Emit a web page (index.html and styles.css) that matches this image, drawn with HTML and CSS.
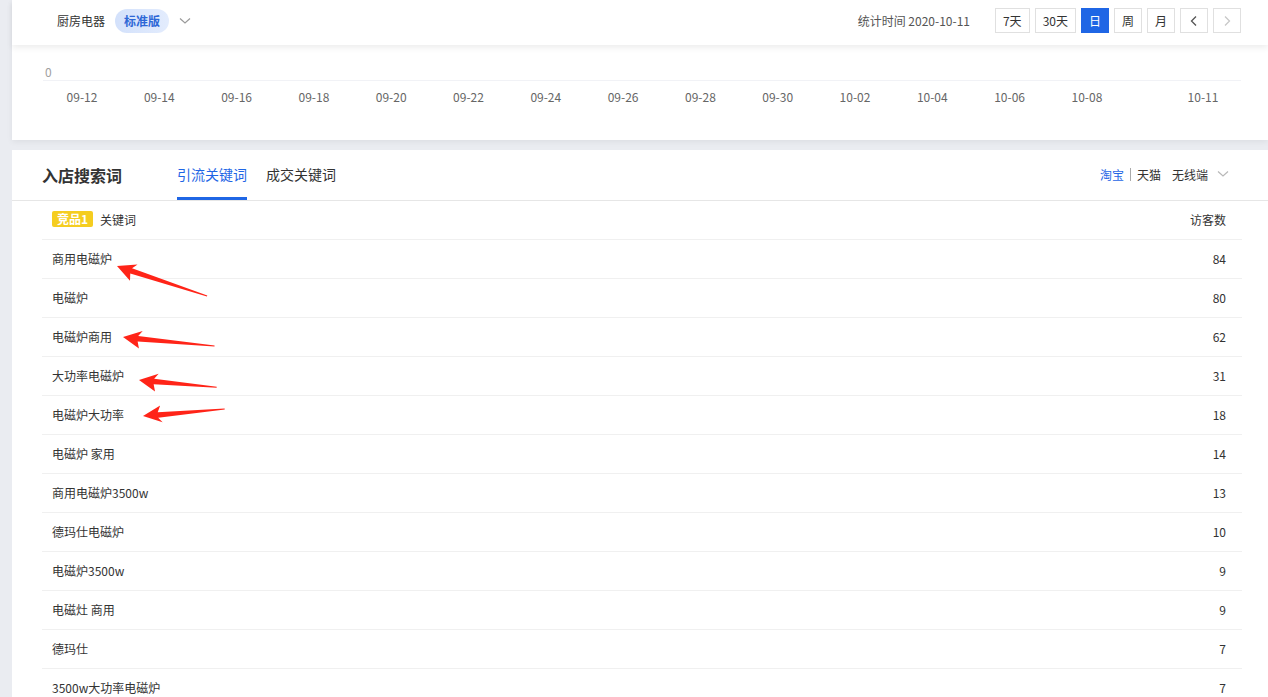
FILE: index.html
```html
<!DOCTYPE html>
<html lang="zh">
<head>
<meta charset="utf-8">
<link rel="stylesheet" href="styles.css">
</head>
<body>
<div class="page">
  <section class="top-card">
    <header class="topbar">
      <div class="crumb">
        <span class="cat">厨房电器</span>
        <span class="edition">标准版</span>
        <svg class="chev" width="12" height="8" viewBox="0 0 12 8"><path d="M1 1.5 L6 6 L11 1.5" fill="none" stroke="#9a9a9a" stroke-width="1.2"/></svg>
      </div>
      <div class="range">
        <span class="stat-time">统计时间 2020-10-11</span>
        <div class="btns">
          <button class="btn">7天</button>
          <button class="btn">30天</button>
          <button class="btn active">日</button>
          <button class="btn">周</button>
          <button class="btn">月</button>
          <button class="btn icon"><svg width="10" height="12" viewBox="0 0 10 12"><path d="M7 1.5 L2.5 6 L7 10.5" fill="none" stroke="#555" stroke-width="1.3"/></svg></button>
          <button class="btn icon"><svg width="10" height="12" viewBox="0 0 10 12"><path d="M3 1.5 L7.5 6 L3 10.5" fill="none" stroke="#c8c8c8" stroke-width="1.3"/></svg></button>
        </div>
      </div>
    </header>
    <div class="chart">
      <div class="y-label">0</div>
      <div class="axis">
        <span class="tick" style="left:39px">09-12</span>
        <span class="tick" style="left:116.3px">09-14</span>
        <span class="tick" style="left:193.6px">09-16</span>
        <span class="tick" style="left:270.9px">09-18</span>
        <span class="tick" style="left:348.2px">09-20</span>
        <span class="tick" style="left:425.5px">09-22</span>
        <span class="tick" style="left:502.8px">09-24</span>
        <span class="tick" style="left:580.1px">09-26</span>
        <span class="tick" style="left:657.4px">09-28</span>
        <span class="tick" style="left:734.7px">09-30</span>
        <span class="tick" style="left:812px">10-02</span>
        <span class="tick" style="left:889.3px">10-04</span>
        <span class="tick" style="left:966.6px">10-06</span>
        <span class="tick" style="left:1043.9px">10-08</span>
        <span class="tick" style="left:1160px">10-11</span>
      </div>
    </div>
  </section>

  <section class="kw-card">
    <div class="kw-head">
      <div class="kw-left">
        <h2 class="kw-title">入店搜索词</h2>
        <nav class="tabs">
          <span class="tab active">引流关键词</span>
          <span class="tab">成交关键词</span>
        </nav>
      </div>
      <div class="kw-right">
        <span class="src active">淘宝</span>
        <span class="sep"></span>
        <span class="src">天猫</span>
        <span class="device">无线端</span>
        <svg class="chev" width="12" height="8" viewBox="0 0 12 8"><path d="M1 1.5 L6 6 L11 1.5" fill="none" stroke="#b8b8b8" stroke-width="1.2"/></svg>
      </div>
    </div>
    <div class="table">
      <div class="row head">
        <div class="cell-kw"><span class="badge">竞品1</span><span>关键词</span></div>
        <div class="cell-num">访客数</div>
      </div>
      <div class="row"><div class="cell-kw">商用电磁炉</div><div class="cell-num">84</div></div>
      <div class="row"><div class="cell-kw">电磁炉</div><div class="cell-num">80</div></div>
      <div class="row"><div class="cell-kw">电磁炉商用</div><div class="cell-num">62</div></div>
      <div class="row"><div class="cell-kw">大功率电磁炉</div><div class="cell-num">31</div></div>
      <div class="row"><div class="cell-kw">电磁炉大功率</div><div class="cell-num">18</div></div>
      <div class="row"><div class="cell-kw">电磁炉 家用</div><div class="cell-num">14</div></div>
      <div class="row"><div class="cell-kw">商用电磁炉3500w</div><div class="cell-num">13</div></div>
      <div class="row"><div class="cell-kw">德玛仕电磁炉</div><div class="cell-num">10</div></div>
      <div class="row"><div class="cell-kw">电磁炉3500w</div><div class="cell-num">9</div></div>
      <div class="row"><div class="cell-kw">电磁灶 商用</div><div class="cell-num">9</div></div>
      <div class="row"><div class="cell-kw">德玛仕</div><div class="cell-num">7</div></div>
      <div class="row"><div class="cell-kw">3500w大功率电磁炉</div><div class="cell-num">7</div></div>
      <div class="row"><div class="cell-kw">电磁炉 商用 大功率</div><div class="cell-num">6</div></div>
    </div>
  </section>
</div>

<svg class="annot" width="1268" height="697" viewBox="0 0 1268 697">
  <g fill="#ff2418">
    <g transform="translate(117,266) rotate(18.4)"><polygon points="0,0 19,-8 15,-2.6 95,-0.4 95,0.6 15,3 17,10"/></g>
    <g transform="translate(123,337) rotate(5.6)"><polygon points="0,0 19,-8 15,-2.6 92,-0.4 92,0.6 15,3 17,10"/></g>
    <g transform="translate(139,380) rotate(5.2)"><polygon points="0,0 19,-8 15,-2.6 78,-0.4 78,0.6 15,3 17,10"/></g>
    <g transform="translate(143,416) rotate(-4.9)"><polygon points="0,0 18,-9 15,-2.6 82,-0.6 82,0.5 15,3 19,8"/></g>
  </g>
</svg>
</body>
</html>
```

FILE: styles.css
```css
* { box-sizing: border-box; }
html, body { margin: 0; padding: 0; overflow: hidden; }
body {
  background: #eaecf1;
  font-family: "Noto Sans CJK SC", "Liberation Sans", sans-serif;
  font-size: 12px;
  color: #333;
  width: 1268px;
  height: 697px;
  position: relative;
}
.page { padding-left: 12px; }

.top-card {
  background: #fff;
  box-shadow: 0 2px 6px rgba(0,0,0,0.06);
}
.topbar {
  height: 45px;
  display: flex;
  align-items: flex-start;
  justify-content: space-between;
  padding: 8px 27px 0 45px;
  box-shadow: 0 3px 6px rgba(0,0,0,0.07);
  position: relative;
  z-index: 1;
  background: #fff;
}
.crumb { display: flex; align-items: center; height: 25px; }
.cat { color: #333; line-height: 25px; }
.edition {
  margin-left: 10px;
  height: 24px;
  line-height: 24px;
  padding: 0 9px;
  border-radius: 12px;
  background: linear-gradient(90deg, #d3e1fb, #e3ecfd);
  color: #2e67d6;
  font-weight: 600;
}
.crumb .chev { margin-left: 10px; }
.range { display: flex; align-items: center; height: 25px; }
.stat-time { color: #555; margin-right: 25px; }
.btns { display: flex; gap: 5px; }
.btn {
  font: inherit;
  color: #333;
  background: #fff;
  border: 1px solid #e0e0e0;
  height: 25px;
  min-width: 27px;
  padding: 0 7px;
  line-height: 23px;
  cursor: pointer;
}
.btn.active { background: #1f66e5; border-color: #1f66e5; color: #fff; }
.btn.icon { width: 28px; padding: 0; display: flex; align-items: center; justify-content: center; }

.chart {
  height: 95px;
  padding: 20px 27px 0 31px;
}
.y-label { color: #a0a0a0; line-height: 14px; padding-left: 2px; }
.axis {
  position: relative;
  margin-top: 1px;
  border-top: 1px solid #f1f2f6;
  height: 40px;
}
.tick {
  position: absolute;
  top: 9px;
  transform: translateX(-50%);
  color: #666;
  line-height: 14px;
  white-space: nowrap;
}

.kw-card {
  margin-top: 10px;
  background: #fff;
  min-height: 600px;
}
.kw-head {
  height: 51px;
  border-bottom: 1px solid #e6e6e6;
  display: flex;
  justify-content: space-between;
  align-items: stretch;
  padding: 0 39px 0 30px;
}
.kw-left { display: flex; align-items: stretch; }
.kw-title {
  margin: 0;
  font-size: 16px;
  font-weight: 600;
  color: #333;
  line-height: 50px;
}
.tabs { display: flex; gap: 19px; margin-left: 55px; }
.tab {
  font-size: 14px;
  line-height: 48px;
  color: #333;
  border-bottom: 3px solid transparent;
  height: 50px;
  margin-bottom: -1px;
}
.tab.active { color: #1f66e5; border-bottom-color: #1f66e5; }
.kw-right { display: flex; align-items: center; padding-bottom: 2px; }
.src { color: #333; }
.src.active { color: #1f66e5; }
.sep { width: 1px; height: 13px; background: #aaa; margin: 0 6px; }
.device { margin-left: 11px; }
.kw-right .chev { margin-left: 9px; }

.table { padding: 0 26px 0 30px; }
.row {
  height: 39px;
  display: flex;
  align-items: center;
  justify-content: space-between;
  border-bottom: 1px solid #f0f0f0;
  padding: 0 16px 2px 10px;
}
.cell-kw { display: flex; align-items: center; gap: 7px; color: #333; }
.cell-num { color: #333; }
.badge {
  background: #f5cd20;
  color: #fff;
  font-weight: 700;
  height: 16px;
  line-height: 16px;
  padding: 0 5px;
  border-radius: 2px;
}

.annot { position: absolute; left: 0; top: 0; pointer-events: none; }
```
